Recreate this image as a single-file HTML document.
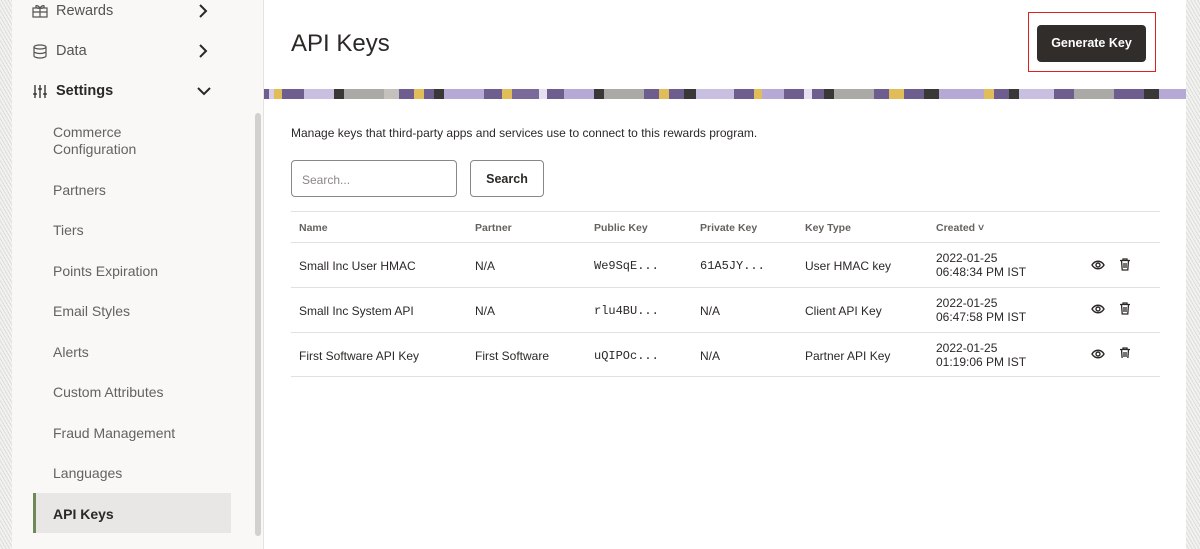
<!DOCTYPE html>
<html><head><style>
*{margin:0;padding:0;box-sizing:border-box}
body{width:1200px;height:549px;overflow:hidden;font-family:"Liberation Sans",sans-serif;background:#ececea;position:relative}
.pat{position:absolute;top:0;bottom:0;background:repeating-linear-gradient(60deg,#f2f2f0 0 2px,#dcdcda 2px 3px),#eee}
.side{position:absolute;left:12px;top:0;width:252px;height:549px;background:#f9f8f6;border-right:1px solid #e4e3e1}
.it{position:absolute;left:41px;font-size:14px;color:#65625e}
.top{position:absolute;left:20px;font-size:14.5px;color:#55524f;display:flex;align-items:center}
.top svg{margin-right:8px}
.chev{position:absolute;left:186px}
.main{position:absolute;left:264px;top:0;width:922px;height:549px;background:#fff}
.band{position:absolute;left:0;top:89px;width:922px;height:10px;background:linear-gradient(90deg,#6e5e90 0 5px,#d7cde8 5px 10px,#e0bd58 10px 18px,#6e5e90 18px 40px,#c9bfe0 40px 70px,#3a3836 70px 80px,#aba9a5 80px 120px,#c4c0bb 120px 135px,#6e5e90 135px 150px,#e0bd58 150px 160px,#6e5e90 160px 170px,#3a3836 170px 180px,#b7a9d6 180px 220px,#6e5e90 220px 238px,#e0bd58 238px 248px,#7a6a9a 248px 275px,#e6e0f0 275px 283px,#6e5e90 283px 300px,#b7a9d6 300px 330px,#3a3836 330px 340px,#aba9a5 340px 380px,#6e5e90 380px 395px,#e0bd58 395px 405px,#6e5e90 405px 420px,#3a3836 420px 432px,#c9bfe0 432px 470px,#6e5e90 470px 490px,#e0bd58 490px 498px,#b7a9d6 498px 520px,#6e5e90 520px 540px,#e6e0f0 540px 548px,#6e5e90 548px 560px,#3a3836 560px 570px,#aba9a5 570px 610px,#6e5e90 610px 625px,#e0bd58 625px 640px,#6e5e90 640px 660px,#3a3836 660px 675px,#b7a9d6 675px 720px,#e0bd58 720px 730px,#6e5e90 730px 745px,#3a3836 745px 755px,#c9bfe0 755px 790px,#6e5e90 790px 810px,#aba9a5 810px 850px,#6e5e90 850px 880px,#3a3836 880px 895px,#b7a9d6 895px 922px)}
h1{position:absolute;left:27px;top:30px;font-weight:normal;font-size:24px;color:#2b2926;font-family:"Liberation Sans",sans-serif}
.gk{position:absolute;left:773px;top:25px;width:109px;height:37px;background:#312d2a;color:#fff;border-radius:4px;font-size:12.5px;font-weight:bold;text-align:center;line-height:37px}
.red{position:absolute;left:764px;top:12px;width:128px;height:60px;border:1.5px solid #e02020}
.desc{position:absolute;left:27px;top:126px;font-size:12px;color:#2b2926}
.inp{position:absolute;left:27px;top:160px;width:166px;height:37px;border:1px solid #8a8784;border-radius:4px;font-size:12px;color:#8a8784;padding:12px 10px}
.btn{position:absolute;left:206px;top:160px;width:74px;height:37px;border:1px solid #8a8784;border-radius:4px;font-size:12.5px;font-weight:bold;color:#2b2926;text-align:center;line-height:36px}
.tbl{position:absolute;left:27px;top:211px;width:869px}
.row{position:relative;border-top:1px solid #e2e1df;height:45px;font-size:12px;color:#2b2926}
.hd{height:31px;color:#65625e;font-weight:bold;font-size:10.5px}
.row span{position:absolute;top:16px}
.hd span{top:10px}
.mono{font-family:"Liberation Mono",monospace;font-size:12px}
.dt{top:8px!important;line-height:14px}
</style></head><body>
<div class="pat" style="left:0;width:12px"></div>
<div class="pat" style="left:1186px;width:14px"></div>
<div class="side">
 <div class="top" style="top:3px"><svg width="16" height="14" viewBox="0 0 16 14" fill="none" stroke="#55524f" stroke-width="1.2"><rect x="1" y="4" width="14" height="9"/><path d="M1 8h14M8 4v9M8 4C6 1 3 1 4 3s4 1 4 1M8 4c2-3 5-3 4-1s-4 1-4 1"/></svg>Rewards</div>
 <div class="top" style="top:43px"><svg width="16" height="15" viewBox="0 0 16 15" fill="none" stroke="#55524f" stroke-width="1.2"><ellipse cx="8" cy="3" rx="6" ry="2"/><path d="M2 3v9c0 1 3 2 6 2s6-1 6-2V3M2 7.5c0 1 3 2 6 2s6-1 6-2"/></svg>Data</div>
 <div class="top" style="top:83px;color:#2b2926;font-weight:bold"><svg width="16" height="15" viewBox="0 0 16 15" fill="none" stroke="#2b2926" stroke-width="1.3"><path d="M3 1v13M8 1v13M13 1v13M1 10h4M6 5h4M11 10h4"/></svg>Settings</div>
 <svg class="chev" style="top:3px" width="10" height="16" viewBox="0 0 10 16" fill="none" stroke="#2b2926" stroke-width="2"><path d="M2 2l6 6-6 6"/></svg>
 <svg class="chev" style="top:43px" width="10" height="16" viewBox="0 0 10 16" fill="none" stroke="#2b2926" stroke-width="2"><path d="M2 2l6 6-6 6"/></svg>
 <svg class="chev" style="top:86px;left:184px" width="16" height="10" viewBox="0 0 16 10" fill="none" stroke="#2b2926" stroke-width="2"><path d="M2 2l6 6 6-6"/></svg>
 <div class="it" style="top:124px;line-height:17px">Commerce<br>Configuration</div>
 <div class="it" style="top:182px">Partners</div>
 <div class="it" style="top:222px">Tiers</div>
 <div class="it" style="top:263px">Points Expiration</div>
 <div class="it" style="top:303px">Email Styles</div>
 <div class="it" style="top:344px">Alerts</div>
 <div class="it" style="top:384px">Custom Attributes</div>
 <div class="it" style="top:425px">Fraud Management</div>
 <div class="it" style="top:465px">Languages</div>
 <div style="position:absolute;left:21px;top:493px;width:198px;height:40px;background:#e8e7e5;border-left:3px solid #6f8a5a"></div>
 <div class="it" style="top:506px;color:#2b2926;font-weight:bold">API Keys</div>
 <div style="position:absolute;left:243px;top:113px;width:6px;height:423px;background:#d2d1cf;border-radius:3px"></div>
</div>
<div class="main">
 <h1>API Keys</h1>
 <div class="red"></div>
 <div class="gk">Generate Key</div>
 <div class="band"></div>
 <div class="desc">Manage keys that third-party apps and services use to connect to this rewards program.</div>
 <div class="inp">Search...</div>
 <div class="btn">Search</div>
 <div class="tbl">
  <div class="row hd"><span style="left:8px">Name</span><span style="left:184px">Partner</span><span style="left:303px">Public Key</span><span style="left:409px">Private Key</span><span style="left:514px">Key Type</span><span style="left:645px">Created ˅</span></div>
  <div class="row"><span style="left:8px">Small Inc User HMAC</span><span style="left:184px">N/A</span><span class="mono" style="left:303px">We9SqE...</span><span class="mono" style="left:409px">61A5JY...</span><span style="left:514px">User HMAC key</span><span class="dt" style="left:645px">2022-01-25<br>06:48:34 PM IST</span></div>
  <div class="row"><span style="left:8px">Small Inc System API</span><span style="left:184px">N/A</span><span class="mono" style="left:303px">rlu4BU...</span><span style="left:409px">N/A</span><span style="left:514px">Client API Key</span><span class="dt" style="left:645px">2022-01-25<br>06:47:58 PM IST</span></div>
  <div class="row" style="border-bottom:1px solid #e2e1df"><span style="left:8px">First Software API Key</span><span style="left:184px">First Software</span><span class="mono" style="left:303px">uQIPOc...</span><span style="left:409px">N/A</span><span style="left:514px">Partner API Key</span><span class="dt" style="left:645px">2022-01-25<br>01:19:06 PM IST</span></div>
 </div>
 <svg style="position:absolute;left:827px;top:259px" width="14" height="100" viewBox="0 0 14 100" fill="none" stroke="#2b2926" stroke-width="1.4"><g id="e"><path d="M1 6c3-5 9-5 12 0c-3 5-9 5-12 0z"/><circle cx="7" cy="6" r="2"/></g><use href="#e" y="44"/><use href="#e" y="89"/></svg>
 <svg style="position:absolute;left:855px;top:258px" width="12" height="100" viewBox="0 0 12 100" fill="none" stroke="#2b2926" stroke-width="1.3"><g id="t"><path d="M1 2.5h10M4 2.5V1h4v1.5M2.5 2.5l.7 9.5h5.6l.7-9.5M5 5v5M7 5v5"/></g><use href="#t" y="44"/><use href="#t" y="89"/></svg>
</div>
</body></html>
